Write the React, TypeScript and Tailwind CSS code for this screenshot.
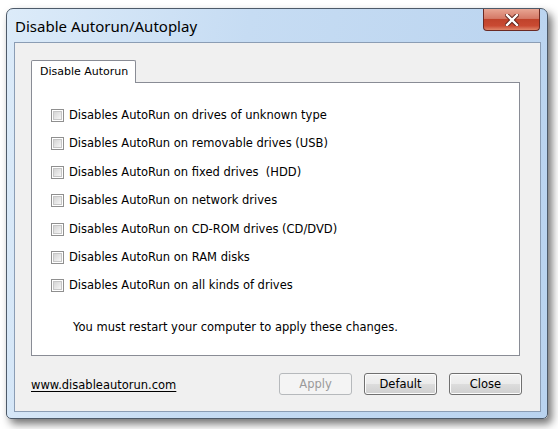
import React from 'react';

const options = [
  'Disables AutoRun on drives of unknown type',
  'Disables AutoRun on removable drives (USB)',
  'Disables AutoRun on fixed drives  (HDD)',
  'Disables AutoRun on network drives',
  'Disables AutoRun on CD-ROM drives (CD/DVD)',
  'Disables AutoRun on RAM disks',
  'Disables AutoRun on all kinds of drives',
];

function CheckBox() {
  return (
    <span className="flex h-[13px] w-[13px] shrink-0 items-center justify-center border border-[#8f8f8f] bg-white">
      <span className="h-[9px] w-[9px] border border-[#c6c6c6] bg-gradient-to-br from-[#d4d4d4] to-[#f6f6f6]" />
    </span>
  );
}

function Button({ label, disabled }: { label: string; disabled?: boolean }) {
  return (
    <button
      disabled={disabled}
      className={
        disabled
          ? 'h-[22px] w-[73px] rounded-[3px] border border-[#b6b9bc] bg-[#f4f4f4] pt-[2px] text-[#9a9a9a]'
          : 'h-[22px] w-[73px] rounded-[3px] border border-[#707070] bg-[linear-gradient(#f2f2f2_0%,#ebebeb_50%,#dddddd_51%,#cfcfcf_100%)] pt-[2px] text-black shadow-[inset_0_0_0_1px_#fcfcfc]'
      }
    >
      {label}
    </button>
  );
}

export default function App() {
  return (
    <div
      className="h-[429px] w-[558px] bg-white pl-[6px] pt-[8px] text-[11.5px] text-black"
      style={{ fontFamily: '"DejaVu Sans", Tahoma, sans-serif' }}
    >
      {/* window frame */}
      <div className="flex h-[411px] w-[542px] flex-col rounded-t-[7px] rounded-b-[5px] border border-[#4d5a69] bg-[linear-gradient(100deg,#dcebf9_0%,#c6dcf3_40%,#b9d3ef_100%)] pb-[6px] pl-[7px] pr-[6px] shadow-[4px_5px_9px_rgba(0,0,0,0.55)]">
        {/* title bar */}
        <div className="flex h-[33px] shrink-0 items-start justify-between">
          <span
            className="pl-[1px] pt-[7px] text-[15px] leading-[20px] text-black"
            style={{ fontFamily: '"Noto Sans", "Open Sans", sans-serif' }}
          >
            Disable Autorun/Autoplay
          </span>
          <button className="mr-[1px] flex h-[22px] w-[57px] items-center justify-center rounded-b-[4px] border border-t-0 border-[#6b2a24] bg-[linear-gradient(#e8a593_0%,#d57a67_45%,#c0432b_50%,#c94a32_80%,#e0866a_100%)]">
            <svg width="14" height="12" viewBox="0 0 14 12">
              <path
                d="M2 1 L12 11 M12 1 L2 11"
                stroke="#5a1e16"
                strokeWidth="4.2"
                strokeLinecap="square"
              />
              <path
                d="M2 1 L12 11 M12 1 L2 11"
                stroke="#ffffff"
                strokeWidth="2.4"
                strokeLinecap="square"
              />
            </svg>
          </button>
        </div>

        {/* client area */}
        <div className="flex flex-1 flex-col border border-[#8b9db4] bg-[#f0f0f0] pl-[16px] pt-[17px]">
          <div className="relative z-10 -mb-px flex h-[23px] w-[105px] items-center rounded-t-[2px] border border-b-0 border-[#898c95] bg-white pl-[8px] text-[11px]">
            Disable Autorun
          </div>
          <div className="mr-[20px] flex h-[274px] flex-col border border-[#898c95] bg-white pl-[19px] pt-[26px]">
            {options.map((label) => (
              <div key={label} className="flex h-[28.4px] items-start gap-[5px]">
                <CheckBox />
                <span className="-mt-[1px] leading-[15px] whitespace-pre">{label}</span>
              </div>
            ))}
            <p className="ml-[22px] mt-[12px] leading-[15px]">
              You must restart your computer to apply these changes.
            </p>
          </div>

          <div className="mt-[17px] flex items-center pr-[18px]">
            <a href="#" className="mt-[3px] flex-1 text-black underline underline-offset-2">
              www.disableautorun.com
            </a>
            <div className="flex gap-[12px]">
              <Button label="Apply" disabled />
              <Button label="Default" />
              <Button label="Close" />
            </div>
          </div>
        </div>
      </div>
    </div>
  );
}
